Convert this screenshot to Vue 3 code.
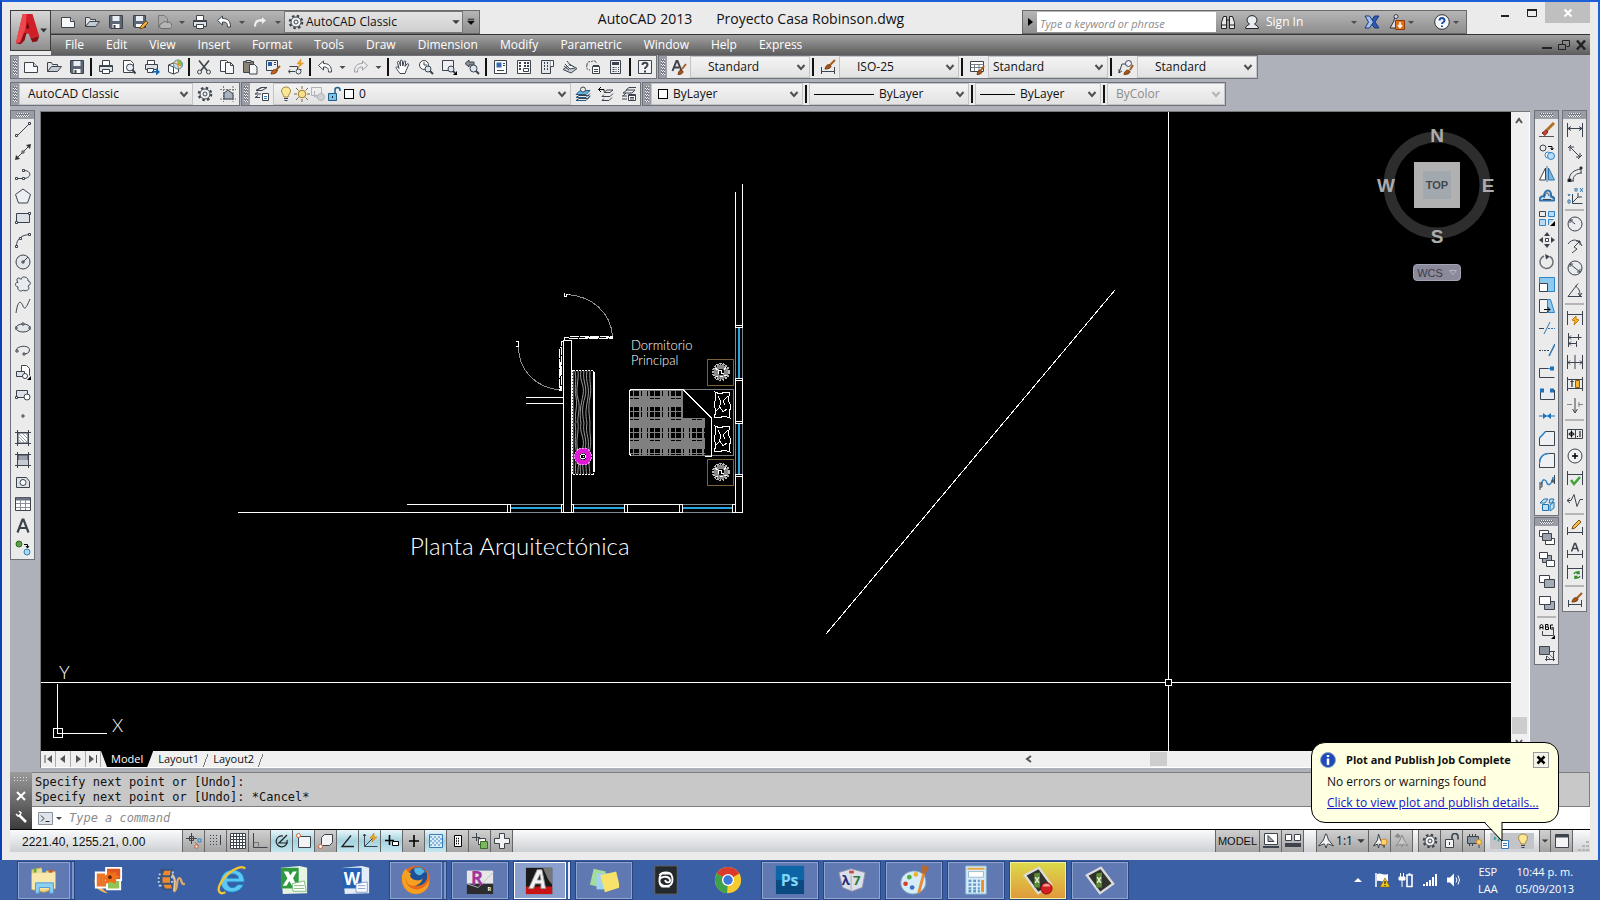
<script setup>
import { h, ref } from 'vue'

const icons = {
  // files
  new: '<path d="M1.5 3.5h9l4 4v6h-13z" fill="#f6f8fa"/><path d="M10.5 3.5v4h4" fill="#c9ced6"/>',
  open: '<path d="M1.5 12.5v-9h4l1 2h5v2" fill="#dfe3e8"/><path d="M1.5 12.5l4-5h10l-4 5z" fill="#c5cbd4"/>',
  save: '<path d="M1.5 1.5h13v13h-12l-1-1z" fill="#5c6674"/><path d="M4.5 2h7v5h-7z" fill="#e8edf3" stroke="none"/><path d="M4.5 10h7v4h-7z" fill="#fff" stroke="none"/><path d="M6.5 11v3" stroke-width="2"/>',
  saveas: '<path d="M1.5 1.5h12v12h-11l-1-1z" fill="#5c6674"/><path d="M4 2h7v5h-7z" fill="#e8edf3" stroke="none"/><path d="M4 10h6v3h-6z" fill="#fff" stroke="none"/><path d="M8 15l1-3 5-5 2 2-5 5z" fill="#f2b13c" stroke="#7a4d12"/>',
  cloud: '<path d="M2.5 1.5h6l3 3v5h-6v4h-3z" fill="#aaa" stroke="#777"/><path d="M6 14.5a2.5 2.5 0 010-5 3 3 0 015-1 3 3 0 013 6z" fill="#b5b5b5" stroke="#6e6e6e"/>',
  print: '<path d="M4.5 6v-4.5h7v4.5" fill="#fff"/><path d="M1.5 6.5h13v6h-13z" fill="#dde1e6"/><path d="M4.5 10.5h7v4h-7z" fill="#fff"/><path d="M2 7.5h12"/>',
  preview: '<path d="M2.5 1.5h7l3 3v9h-10z" fill="#fff"/><circle cx="9" cy="8.5" r="3.5" fill="#e6edf4"/><path d="M11.5 11l3 3.5" stroke-width="2"/>',
  publish: '<path d="M3.5 5v-3.5h7v3.5" fill="#fff"/><path d="M1.5 5.5h12v5h-12z" fill="#dde1e6"/><path d="M3.5 9.5h6v4h-6z" fill="#fff"/><path d="M8 12h4v-3l4 4-4 3.5v-3h-4z" fill="#1668b4" stroke="none"/>',
  threeD: '<path d="M1.5 6l5-2 5 2v7l-5 2-5-2z" fill="#fff"/><path d="M1.5 6l5 2 5-2M6.5 8v7"/><circle cx="11" cy="5.5" r="4.5" fill="#bfe0ef" stroke="#4a7d92"/><path d="M11 1a4 4 0 014 5l-4-.5z" fill="#7ac043" stroke="none"/><path d="M11 1v9M7 4l8 3" stroke="#e2801b"/>',
  cut: '<path d="M3 1.5l8 10M13 1.5l-8 10" stroke-width="1.6"/><circle cx="3.5" cy="13" r="2"/><circle cx="12.5" cy="13" r="2"/>',
  copy: '<path d="M6 12.5h-4.5v-11h6l2 2" fill="#fff"/><path d="M6.5 3.5h5l3 3v8h-8z" fill="#f4f6f8"/><path d="M11.5 3.5v3h3"/>',
  paste: '<path d="M1.5 2.5h10v11h-10z" fill="#8b8276"/><path d="M4 1.5h5v2h-5z" fill="#ddd"/><path d="M7.5 5.5h5l2.5 2.5v7h-7.5z" fill="#f4f6f8"/>',
  match: '<path d="M1.5 1.5h11v10h-11z" fill="#e9eef5"/><path d="M3 3h4v4h-4z" fill="#2a5fa8" stroke="none"/><path d="M9 3.5h2M9 5.5h2"/><path d="M15 7l-4 4" stroke="#a65c1d" stroke-width="2"/><path d="M6 15c1-4 3-5 5-4s1 4-5 4z" fill="#c2651a" stroke="#7a3b0c"/>',
  blockEdit: '<path d="M1.5 7.5h8v3h4"/><path d="M1 12.5h6M2 10.5l-1.5 2 1.5 2"/><circle cx="10.5" cy="12.5" r="2.5" fill="#e6edf4"/><path d="M13 0l-4 5h3l-2 4 5.5-5h-3z" fill="#f5a81c" stroke="#d27d0a" stroke-width=".5"/>',
  undo: '<path d="M1.5 6.5l5-4.5v2.5c5 0 8 2 8 8.5h-3c0-4-1-5-5-5v3z" fill="#fff"/>',
  redo: '<path d="M14.5 6.5l-5-4.5v2.5c-5 0-8 2-8 8.5h3c0-4 1-5 5-5v3z" fill="#eee" stroke="#9a9da2"/>',
  caret: '<path d="M3 5.5h10l-5 5z" fill="#3b3b3b" stroke="none"/>',
  caretSmall: '<path d="M4 6.5h8l-4 4z" fill="#4b4b4b" stroke="none"/>',
  chevron: '<path d="M4.5 6l3.5 4 3.5-4" stroke="#4f4f4f" stroke-width="2"/>',
  pan: '<path d="M5 14.5c-2-3-4-5-4-6s2-1 3 1l-1.5-6c0-1.5 1.5-1.5 2 0l1 3.5-.2-5c.2-1.3 1.8-1.3 2 0l.5 5 1.2-4.5c.6-1.2 1.8-.8 1.7.5l-.7 4.5 2-2.5c1-.8 2 0 1.5 1-1 3-2 4-3.5 8.5z" fill="#fff"/>',
  zoomRt: '<circle cx="6" cy="6" r="4.5" fill="#fff"/><path d="M6 3v3h3"/><circle cx="10" cy="10" r="3" fill="#dce6ef"/><path d="M12 12l3 3" stroke-width="2"/>',
  zoomWin: '<path d="M1.5 1.5h11v10h-11z" fill="#eef0f3"/><circle cx="10" cy="10" r="3" fill="#dce6ef"/><path d="M12 12l2 2" stroke-width="2"/><path d="M16 16h-4l4-4z" fill="#000" stroke="none"/>',
  zoomPrev: '<path d="M1 4.5l4-3.5v2h5v3h-5v2z" fill="#8a8d93"/><circle cx="9.5" cy="9.5" r="3.5" fill="#dce6ef"/><path d="M12 12l3 3" stroke-width="2"/>',
  properties: '<path d="M1.5 1.5h12v13h-12z" fill="#fff"/><path d="M3.5 3.5h5v5h-5z" fill="#356ab1" stroke="none"/><path d="M10 4.5h2M10 6.5h2M4 11.5h7"/>',
  designCenter: '<path d="M1.5 1.5h13v13h-13z" fill="#fff"/><path d="M3 4h2M3 7h2M3 10h2M8 4h2M11 4h2M8 7h2M11 7h2" stroke-width="2"/><path d="M7.5 9.5h5v3h-5z"/>',
  palettes: '<path d="M2.5 1.5h9v13h-9z" fill="#e3e6ea"/><path d="M11.5 1.5h3v6h-3" fill="#fff"/><path d="M5 4h1M8 4h1M5 7h1M8 7h1M5 10h1M8 10h1" stroke-width="2"/>',
  sheetSet: '<path d="M1 10.5l7-5 7 4-6 4.5z" fill="#c8ccd3"/><path d="M3 5l5 5 5-1M2 7l5 4M5 2l4 5" fill="#fff"/>',
  markup: '<path d="M2 6c0-3 2-4 4-3 2-2 6-1 5 1M2 6c-1 3 0 5 3 5" stroke-dasharray="2 1"/><path d="M7.5 7.5h7v7h-7z" fill="#fff"/><path d="M9 10.5h4M9 12.5h4"/><path d="M8 7h6" stroke-width="2"/>',
  calc: '<path d="M2.5 1.5h10v13h-10z" fill="#eef0f3"/><path d="M4 4.5h7" stroke-width="3"/><path d="M4.5 8.5h2M7.5 8.5h1M10 8.5h1M4.5 10.5h2M7.5 10.5h1M10 10.5h1M4.5 12.5h2M7.5 12.5h1M10 12.5h1"/>',
  help: '<path d="M1.5 1.5h13v13h-13z" fill="#f2f3f5"/><path d="M5.5 6c0-3 5-3 5 0 0 2-2.5 1.5-2.5 4M8 11.5v2" stroke-width="2"/>',
  textStyle: '<path d="M1.5 12l4-10h1l4 10M3 8.5h5" stroke-width="2"/><path d="M15 5l-4 5" stroke="#a65c1d" stroke-width="2"/><path d="M7 15.5c1-4 2-5 4-4s1 4-4 4z" fill="#a6561b" stroke="#6e350c"/>',
  dimStyle: '<path d="M1.5 8v7M14.5 8v7M2 12.5h12"/><path d="M15 1l-5 5" stroke="#a65c1d" stroke-width="2"/><path d="M5 10c1-4 3-5 5-4s1 4-5 4z" fill="#a6561b" stroke="#6e350c"/>',
  tableStyle: '<path d="M1.5 2.5h13v10h-13z" fill="#fff"/><path d="M1.5 5.5h13M1.5 8.5h13M5.5 5v7M10 5v7" stroke="#7b8087"/><path d="M15 7l-3 4" stroke="#a65c1d" stroke-width="2"/><path d="M8 15.5c1-4 2-5 4-4s1 4-4 4z" fill="#a6561b" stroke="#6e350c"/>',
  leaderStyle: '<path d="M1 14l3-9h4"/><path d="M1 10l0 4 3-2"/><circle cx="10.5" cy="4.5" r="3" fill="#eef"/><path d="M15 6l-3 5" stroke="#a65c1d" stroke-width="2"/><path d="M6 15.5c1-4 3-5 5-4s1 4-5 4z" fill="#a6561b" stroke="#6e350c"/>',
  gear: '<circle cx="8" cy="8" r="6.3" stroke-width="2" stroke-dasharray="2.5 2.45"/><circle cx="8" cy="8" r="5" fill="#f2f3f5"/><circle cx="8" cy="8" r="2"/>',
  frame: '<path d="M3.5 0v16M13 0v16M0 3.5h16M0 13h16" stroke="#777" stroke-dasharray="2 1"/><path d="M4 13v-6l4-3 5 4v5z" fill="#a9b3c0"/>',
  layers: '<path d="M2 4.5h6l5-3h-6zM1 8h6M1 11.5h5M2 4.5l6-3M1 8l3-2M1 11.5l3-2"/><path d="M8.5 7.5h6v7h-6z" fill="#fff"/><path d="M10 10.5h3M10 12.5h3" stroke="#2a77b8"/>',
  bulb: '<path d="M8 1c-3 0-4.5 2-4.5 4s2 3.5 2.5 6h4c.5-2.5 2.5-4 2.5-6s-1.5-4-4.5-4z" fill="#fbe795" stroke="#a48a3c"/><path d="M6 12.5h4M6.5 14.5h3"/>',
  sun: '<circle cx="8" cy="8" r="3.8" fill="#fbe08a" stroke="#9b7d2e"/><path d="M8 0v3M8 13v3M0 8h3M13 8h3M2 2l2.5 2.5M11.5 11.5l2.5 2.5M14 2l-2.5 2.5M2 14l2.5-2.5" stroke="#7d6c3d"/>',
  vpFreeze: '<path d="M1.5 1.5h10v8h-10zM4.5 5v6h4" stroke="#b0b3b8"/><circle cx="11" cy="11" r="3.5" fill="#cfd1d5" stroke="#b0b3b8"/>',
  unlock: '<path d="M2.5 7.5h8v7h-8z" fill="#7fc0e6" stroke="#1e5e8a"/><path d="M9 7v-3a2.5 2.5 0 015 0v1" stroke="#1e5e8a" stroke-width="1.5"/><path d="M6.5 10v2" stroke="#123"/>',
  layerCur: '<path d="M1 14.5l3-2h9M1 11.5l3-2h10M13 12.5l2-3" /><path d="M1 8.5l4-4h10l-4 4z" fill="#69b5e0" stroke="#245a80"/><path d="M1 11.5h10l4-4M1 14.5h10l4-4" stroke="#245a80"/><circle cx="8" cy="3.5" r="2.5" fill="#eee"/>',
  layerPrev: '<path d="M6 6.5h6l3-2.500h-6zM4 10.500h8l3-3M4 10.500l2-2M4 14.500h7l3-3M4 14.500l2-2" fill="none"/><path d="M1 3.5h5v2M3 1l-2.5 2.5 2.5 2.5" stroke="#000"/>',
  layerStates: '<path d="M2 10l3-3M2 7l4-3h8l-3 3zM5 4l3-2.5h7M1 10h5M1 13h5"/><path d="M7.5 8.5h7v6h-7z" fill="#fff"/><path d="M8 9.5h6M9 11.5h4M9 13h4"/>',
  // draw
  line: '<path d="M2 14l12-12"/><path d="M.5 12.5h2v2h-2zM13.5 .5h2v2h-2z" fill="#fff"/>',
  xline: '<path d="M1 15l14-14"/><path d="M0 16l1-5 4 4zM16 0l-5 1 4 4z" fill="#333" stroke="none"/><path d="M7 7h2v2h-2z" fill="#fff"/>',
  pline: '<path d="M2 12.5h6c9 0 9-8 1-8"/><path d="M.5 11.5h2v2h-2zM7.5 3.5h2v2h-2zM7.5 11.5h2v2h-2z" fill="#fff"/>',
  polygon: '<path d="M8 1l7.5 5.5-3 8.5h-9l-3-8.5z" fill="#eceff3"/>',
  rect: '<path d="M1.5 3.5h13v9h-13z" fill="#dde1e7"/><path d="M.5 11.5h2v2h-2zM13.5 2.5h2v2h-2z" fill="#fff"/>',
  arc: '<path d="M1.5 14c0-7 5-11 13-11.5"/><path d="M.5 13.5h2v2h-2zM4.5 5.5h2v2h-2zM13.5 1.5h2v2h-2z" fill="#fff"/>',
  circle: '<circle cx="8" cy="8" r="7" fill="#e3e6ea"/><path d="M8 8l5-5M7 7h2v2h-2z"/>',
  revcloud: '<path d="M6 3.500c0-4 8-3 7 1.500 3 0 3 4 0 5 3 4-3 6-5 4-1 2-6 1-5-3-4-1-3-5 0-4.500-3-4 1-6 3-3z" fill="#e8ebef"/>',
  spline: '<path d="M1 15c2-14 5-12 7-7s4 0 7-7"/>',
  ellipse: '<ellipse cx="8" cy="8" rx="7" ry="4" fill="#e3e6ea"/><path d="M7 3h2v2h-2zM0 7h2v2h-2zM14 7h2v2h-2z" fill="#fff"/>',
  ellArc: '<path d="M1.5 9c-2-5 13-7 13-1 0 3-3 4-6 4"/><path d="M1 8h2v2h-2zM8 11h2v2h-2z" fill="#fff"/>',
  insert: '<path d="M6.5 7v-5.5h5l3 3v7" fill="#fff"/><path d="M1.5 7.5h8v5h-8z" fill="#dde1e7"/><circle cx="10" cy="12" r="2.5" fill="#fff"/><path d="M16 16h-4l4-4z" fill="#000" stroke="none"/>',
  block: '<path d="M1.5 4.5h11v7h-11z" fill="#dde1e7"/><circle cx="12" cy="11" r="3" fill="#fff"/><path d="M.5 10.5h2v2h-2z" fill="#fff"/>',
  point: '<path d="M7 7h2v2h-2z"/>',
  hatch: '<path d="M3 3h10v10h-10z" fill="#fff"/><path d="M3 6l7 7M3 9l4 4M4 4l8 8M7 3l6 6M10 3l3 3" stroke="#9ba1aa"/><path d="M2.5 0v16M13.5 0v16M0 2.5h16M0 13.5h16"/>',
  gradient: '<path d="M3 3h10v10h-10z" fill="#9aa1ac"/><path d="M3 8h10v5h-10z" fill="#c7ccd3" stroke="none"/><path d="M2.5 0v16M13.5 0v16M0 2.5h16M0 13.5h16"/>',
  region: '<path d="M1.5 3.5h10l3 4v6h-13z" fill="#dde1e7"/><circle cx="8" cy="8.5" r="3" fill="#fff"/>',
  table: '<path d="M.5 1.5h15v13h-15z" fill="#fff"/><path d="M1 3h14" stroke-width="3" stroke="#6b7380"/><path d="M1 7.5h14M1 11.5h14M5.5 4v10M10.5 4v10" stroke="#8b9098"/>',
  mtext: '<path d="M2.5 14.5l5-13h1l5 13M4.5 10h7" stroke-width="2.2"/>',
  addSel: '<circle cx="4" cy="4" r="3" fill="#5aa04a" stroke="#2f6a22"/><circle cx="12" cy="12" r="3" fill="#a8d8f2" stroke="#3183b5"/><path d="M9 4.5h3.5v3M11 6l1.5 2 1.5-2" stroke="#000"/>',
  // modify
  erase: '<path d="M0 14.5h15" stroke="#555"/><path d="M15 1l-8 8" stroke="#b07025" stroke-width="3"/><path d="M7 8l2 2-3 3.5-3-2.5z" fill="#d2403a" stroke="#6e2b1c"/>',
  copyObj: '<circle cx="4" cy="4" r="3"/><circle cx="9" cy="11" r="3" fill="#fff" stroke="#2f85c7"/><circle cx="12" cy="12" r="3.5" fill="#b9dcf2" stroke="#2f85c7"/><path d="M9 2.5h4v3M11.5 4l1.5 2 1.5-2" stroke="#000"/>',
  mirror: '<path d="M6.5 2v12h-6z" fill="#fff"/><path d="M9.5 2v12h6z" fill="#7fb8e2" stroke="#2f74ad"/><path d="M8 0v16" stroke="#2f74ad"/>',
  offset: '<path d="M1 12.5c-1-3 2-5 4-4 0-8 8-8 7 0 4 0 4 4 3 4z" fill="#cfe5f5" stroke="#2f74ad" stroke-width="2"/><path d="M4 11.5h8M6 8c0-4 4-4 4 0"/>',
  array: '<path d="M.5 1.5h6v5h-6z"/><path d="M9.5 1.5h6v5h-6zM.5 9.5h6v6h-6zM9.5 15v-5.5h5" fill="#b9dcf2" stroke="#2f85c7"/><path d="M16 16h-5l5-5z" fill="#000" stroke="none"/>',
  move: '<path d="M6.5 6.5h3v3h-3z" fill="#fff"/><path d="M8 0l3 4h-6zM8 16l3-4h-6zM0 8l4-3v6zM16 8l-4-3v6z" fill="#3c434c" stroke="none"/>',
  rotate: '<path d="M11 2.5a6.5 6.5 0 11-6-.5" stroke-width="1.5" stroke="#6c7076"/><path d="M6 0l5 2.5-4 3z" fill="#3c434c" stroke="none"/>',
  scale: '<path d="M.5 1.5h15v14h-15z" fill="#8ec9ee" stroke="#2f85c7"/><path d="M.5 7.5h8v8h-8z" fill="#fff"/>',
  stretch: '<path d="M.5 1.5h8v13h-8z" fill="#f4f4f4"/><path d="M8.5 1.5h3l4 13h-7z" fill="#8ec9ee" stroke="#2f85c7"/><path d="M5 11.5h6M8.5 9l2.5 2.5-2.5 2.5" stroke="#000"/>',
  trim: '<path d="M0 8.5h5"/><path d="M5 14l6-12" stroke="#2f74ad"/><path d="M9 8.5h7" stroke="#2f74ad" stroke-dasharray="2 1"/>',
  extend: '<path d="M0 8.5h4M5 8.5h5" stroke-dasharray="2 1"/><path d="M10 14l6-12" stroke="#2f74ad" stroke-width="1.5"/>',
  breakAt: '<path d="M9 4.5h-8.5v9h15"/><path d="M9 4.5h6" stroke="#2f85c7"/><path d="M11 2.5h4v4h-4z" fill="#1b72bd" stroke="none"/>',
  breakObj: '<path d="M1.5 4v9.5h14v-9.5" fill="#e8ebef"/><path d="M1 2.5h4v4h-4zM11 2.5h4v4h-4z" fill="#1b72bd" stroke="none"/>',
  join: '<path d="M0 8h16" stroke="#1b72bd"/><path d="M4 5l4 3-4 3zM12 5l-4 3 4 3z" fill="#1b72bd" stroke="none"/>',
  chamfer: '<path d="M.5 15v-7l6-6.5h9v14h-15z" fill="#eef0f3"/><path d="M.5 8l6-6.5" stroke="#2f85c7" stroke-width="1.5"/>',
  fillet: '<path d="M.5 15.5v-4c0-6 4-10 9-10h6v14z" fill="#eef0f3"/><path d="M.5 11c0-6 4-9.5 9-9.5" stroke="#2f85c7" stroke-width="1.5"/>',
  blend: '<path d="M2 11c2-8 5-5 6-2s5 2 6-6" stroke="#2f85c7" stroke-width="1.5"/><path d="M1 8v5h2v-5M15.5 1v9M1 13v3"/><path d="M13 6h2v2h-2z"/>',
  explode: '<path d="M1 7l4-4h4l-3 4zM11 3h4l-2 4h-3zM3.500 8.500h6v6h-6zM11 9l4-3v6l-4 3z" fill="#bfe0f5" stroke="#1f74b0"/>',
  front: '<path d="M.5 1.5h9v6h-9zM6.5 9.5h9v6h-9z" fill="#fff"/><path d="M3.5 4.5h9v7h-9z" fill="#9da3ad"/>',
  back: '<path d="M3.5 4.5h9v7h-9z" fill="#9da3ad"/><path d="M.5 1.5h8v6h-8zM7.5 9.5h8v6h-8z" fill="#fff"/>',
  above: '<path d="M.5 2.5h10v7h-10z" fill="#fff"/><path d="M5.5 6.5h10v8h-10z" fill="#a5abb4"/>',
  under: '<path d="M5.5 6.5h10v8h-10z" fill="#a5abb4"/><path d="M.5 1.5h11v8h-11z" fill="#fff"/>',
  abc: '<path d="M3.5 8v4.5h11v-8h-2"/><path d="M1 6.5v-4l1.5-1 1.5 1v4M1 4.5h3M6.5 1.5v5h3v-2.5h-3M6.5 1.5h2.5v2M14 2h-2.5v4h2.5" stroke="#000"/><path d="M16 16h-4l4-4z" fill="#000" stroke="none"/>',
  hatchBack: '<path d="M.5 1.5h10v8h-10z" fill="#8d95a1"/><path d="M6 14.5h10M7.5 11v5M14.5 6v10M11 6.5h5"/><path d="M8 11l3 3M11 10l3 3" stroke="#777"/>',
  // dimension
  dimLin: '<path d="M.5 1v14M15.5 1v14M1 6.5h14M4 4.5l-3 2 3 2M12 4.5l3 2-3 2"/>',
  dimAli: '<path d="M1 4l3-3M11 15l4-4M3 3l10 10M3 7v-4h4M13 9v4h-4"/>',
  dimArc: '<path d="M2 15c0-8 5-11 12-12M6 15c0-5 3-8 9-8M1 15h6M14 1v6"/><path d="M1 13h3v3h-3zM13 1h2v2h-2z" fill="#000"/>',
  dimOrd: '<path d="M5.5 6v9.5h10M6 14l5-5h4M11 9v-4"/><path d="M1 6l1 2 1-2M1 12h2v3h-2zM8 0h2v3h-2zM13 0l3 4M16 0l-3 4" stroke="#2f74ad"/>',
  dimRad: '<circle cx="8" cy="8" r="7" fill="#e9ebee"/><path d="M8 8l-5-4M3 7v-3h3"/>',
  dimJog: '<path d="M1 6c4-6 11-5 14 2M5 15l5-4-3-2 6-6M9 3h4v4"/>',
  dimDia: '<circle cx="8" cy="8" r="7" fill="#e9ebee"/><path d="M3 4l10 8M3 7v-3h3M13 9v3h-3"/>',
  dimAng: '<path d="M15 14.5h-14l10-13M8 4c4 2 5 5 5 10M11 11l2 3 2-3"/>',
  dimQuick: '<path d="M.5 1v14M15.5 1v14M1 4.5h14"/><path d="M9 6l-4 4 3 1-1 4 5-5-3-1z" fill="#f5b52c" stroke="#c97f0c"/>',
  dimBase: '<path d="M1.5 1v14M1.5 5.5h13M1.5 11.5h8M11.5 2v6M9.5 9v6M4 3.5l-2 2 2 2M4 9.5l-2 2 2 2"/>',
  dimCont: '<path d="M.5 1v14M8 1v14M15.5 1v14M1 8.5h14M3 6.5l-2 2 2 2M13 6.5l2 2-2 2"/>',
  dimSpace: '<path d="M.5 1v14M15.5 1v14M1 3.5h14M1 12.5h14"/><path d="M8.5 4.5h4v7h-4z" fill="#f5b52c" stroke="#8a5b0d"/><path d="M5 5v6M3.5 6l1.5-1.5 1.5 1.5" stroke="#000"/>',
  dimBreak: '<path d="M8 0v14M5.5 11l2.5 4 2.5-4" /><path d="M0 6.5h5M11 6.5h5M12 4v5" stroke="#888"/>',
  tolerance: '<path d="M.5 3.5h15v9h-15zM8.5 3v9"/><circle cx="4.5" cy="8" r="2"/><path d="M4.5 4.5v7M1.5 8h6M10.5 11v-1M13 5v6"  stroke="#000"/>',
  center: '<circle cx="8" cy="8" r="7" fill="#f0f1f3"/><path d="M8 5v6M5 8h6" stroke="#000" stroke-width="1.5"/>',
  inspect: '<path d="M.5 1v14M15.5 1v14M1 4.5h14"/><path d="M4 10l3 4 6-7" stroke="#3fa535" stroke-width="2.5"/>',
  jogLine: '<path d="M0 8.5h4l3-6 3 12 3-7h3M3 6l-3 2.5 3 2.5"/>',
  dimEdit: '<path d="M.5 7v8M15.5 7v8M1 12.5h14"/><path d="M5 9l1-3 6-6 2 2-6 6z" fill="#f5c14a" stroke="#7a4d12"/>',
  dimText: '<path d="M.5 8v8M15.5 8v8M1 12.5h14"/><path d="M4.5 9.500l3-8h1l3 8M6 6.500h4" stroke-width="1.5"/>',
  dimUpd: '<path d="M.5 1v14M15.5 1v14M1 4.5h14"/><path d="M7 10a3 3 0 015-1M13 12a3 3 0 01-5 1M12 7v2.5h-2.5M8 15v-2.5h2.5" stroke="#2f8a2a" stroke-width="1.4"/>',
  // status bar
  infer: '<path d="M5.5 0v11M0 5.5h11M3.5 3.5h4v4h-4z"/><path d="M9 9l4 4" stroke="#c4673c"/><path d="M12 6h3v3h-3z" stroke="#2f85c7"/><path d="M9 12h3v3h-3z" stroke="#c4673c" fill="#fff"/>',
  snap: '<path d="M2 2.5h9M2 5.5h9M2 8.5h9M2 11.5h9" stroke-dasharray="1 2"/><path d="M12.5 2v10"/>',
  grid: '<path d="M.5 .5h15v15h-15z" fill="#fff"/><path d="M3.5 0v16M6.5 0v16M9.5 0v16M12.5 0v16M0 3.5h16M0 6.5h16M0 9.5h16M0 12.5h16"/>',
  ortho: '<path d="M1.5 0v14.5h14"/><path d="M2 9.5h4.5v5" stroke="#777"/>',
  polar: '<path d="M14 10h-9l8-8M13 7a5.5 5.5 0 11-4-4" stroke="#222" stroke-width="1.2"/>',
  osnap: '<path d="M2.5 3.5h12v11h-12z" fill="#f2f3f5"/><circle cx="2.5" cy="2.5" r="2" stroke="#d4622a" fill="#fff"/>',
  osnap3: '<path d="M3.5 4.5l3-3h8v8l-3 3h-8z" fill="#f2f3f5"/><circle cx="2.5" cy="13.5" r="2" stroke="#d4622a" fill="#fff"/>',
  otrack: '<path d="M14 13.5h-12l9-11" stroke="#222" stroke-width="1.3"/>',
  ducs: '<path d="M2.5 1v12.5h13M3 13l8-8M1 3l1.5-2 1.5 2"/><path d="M12 0l-4 5h3l-1 4 5-5h-3z" fill="#f5a81c" stroke="#c97f0c" stroke-width=".6"/>',
  dyn: '<path d="M5.5 2v10M1 7.5h9" stroke="#000" stroke-width="1.6"/><path d="M8.5 8.5h6v4h-6z" fill="#fff" stroke="#000"/>',
  lwt: '<path d="M8 2v12M3 8h10" stroke="#000" stroke-width="1.6"/>',
  tpy: '<path d="M1.5 1.5h13v13h-13z" fill="#d8edf9" stroke="#3a78b3"/><path d="M2 4h12M2 8h12M2 12h12" stroke="#88b9dd" stroke-width="2" stroke-dasharray="2 2"/><path d="M4 6h10M4 10h10" stroke="#88b9dd" stroke-width="2" stroke-dasharray="2 2"/>',
  qp: '<path d="M4.5 2.5h7v11h-7z" fill="#fff" stroke="#000"/><path d="M6 5.5h4M6 8h4M6 10.5h4" stroke="#000" stroke-dasharray="1 1" stroke-width="1.5"/>',
  cycling: '<path d="M4.5 0v8M0 4.5h8M8 6.5v-1M6.5 5.5h7v6h-7z" fill="#fff"/><path d="M8.5 8.5h7v7h-7z" fill="#7bb661" stroke="#3a6d25"/>',
  annoMon: '<path d="M5.5 .5h5v5h5v5h-5v5h-5v-5h-5v-5h5z" fill="#f2f3f5"/>',
  modelIc: '<path d="M1.5 .5h13v11h-13z" fill="#fff"/><path d="M5 2.5v6h6z" fill="#aaa"/><path d="M0 14h16" stroke-width="2"/>',
  layoutsIc: '<path d="M.5 1.5h6v6h-6zM9.5 1.5h6v6h-6z" fill="#fff"/><path d="M0 12h16" stroke-width="4"/>',
  anno: '<path d="M7.5 1l-2 6-5 6 5-2h1l1.5 4 1.5-4h1l5 2-5-6-2-6z" fill="#f2f3f5"/>',
  annoLight: '<path d="M6.5 1l-1 6-4 6 4-2 1 4 1-4 5 2-4-6z" fill="#f2f3f5"/><circle cx="12" cy="9" r="3" fill="#ffd27a" stroke="#d98e1c"/><path d="M12 12v3"/>',
  annoAuto: '<path d="M8 2l-2 5-4 6 5-2 1 3 1-3 5 2-4-6z" fill="#c9c9c9" stroke="#8a8a8a"/><path d="M1 3l4 1M3 1l3 3" stroke="#8a8a8a" stroke-width="2"/>',
  lockOpen: '<path d="M1.5 6.5h8v8h-8z" fill="#f2f3f5"/><path d="M8 6v-2.5a3 3 0 016 0v3" stroke-width="1.6"/><path d="M5.5 9v3"/>',
  hardware: '<path d="M1.5 3.5h11v7h-11z" fill="#8d95a1"/><path d="M3.5 1v2M6.5 1v2M9.5 1v2M3.5 11v2M6.5 11v2" /><circle cx="13" cy="9" r="2.5" fill="#ffd27a" stroke="#d98e1c"/><path d="M13 12v3"/>',
  plotJob: '<path d="M1 5l12 5" stroke="#3fa6a0" stroke-dasharray="2 2" stroke-width="3"/><path d="M8.5 7.5h7v8h-7z" fill="#fff" stroke="#3a78b3"/><path d="M10 10.5h4M10 12.5h4" stroke="#3a78b3"/>',
  clean: '<path d="M1.5 1.5h13v13h-13z" fill="#f4f4f4"/><path d="M2 3h12" stroke-width="3"/>',
  // title bar
  binoc: '<path d="M1.5 14.5v-6l2-6h3v12zM14.5 14.5v-6l-2-6h-3v12z" fill="#e8e8e8" stroke="#222"/><path d="M6.5 6h3M2 11h4M10 11h4" stroke="#222"/>',
  user: '<path d="M1.5 14.5c0-3 3-3 4-4.5a5 4.5 0 115 0c1 1.5 4 1.5 4 4.5z" fill="#e9edf2" stroke="#222"/>',
  exchange: '<path d="M10.500 2h4.500l-4 6 4 6h-4.500l-4-6z" fill="#2d5bb5" stroke="#183a80"/><path d="M1 2h4.500l4 6-4 6h-4.500l3.500-6z" fill="#a9c1ea" stroke="#183a80"/>',
  connect: '<path d="M6 1l-1 6-4 7h7" fill="#dde" stroke="#333"/><circle cx="7" cy="2.5" r="2" fill="#dde"/><path d="M6.5 6.5h9v9h-9z" fill="#e0701c" stroke="#8c3d06"/><path d="M11 8v5M9 11l2 2.5 2-2.5" stroke="#fff" stroke-width="1.5"/>',
  helpRound: '<circle cx="8" cy="8" r="7.3" fill="#f6f8fb" stroke="#333"/><path d="M5.5 6.5c0-3.5 5-3.5 5 0 0 2-2.5 1.5-2.5 3.5M8 11.5v1.5" stroke="#1d4da0" stroke-width="2"/>',
}

const Icon = (p) =>
  h('svg', {
    viewBox: '0 0 16 16',
    fill: 'none',
    stroke: '#3c434c',
    'stroke-width': 1,
    'aria-hidden': 'true',
    innerHTML: icons[p.name],
  })

const menus = ['File', 'Edit', 'View', 'Insert', 'Format', 'Tools', 'Draw', 'Dimension', 'Modify', 'Parametric', 'Window', 'Help', 'Express']

// '|' is a separator, '>' a narrow drop-down arrow
const standardBar = ['new', 'open', 'save', '|', 'print', 'preview', 'publish', 'threeD', '|', 'cut', 'copy', 'paste', 'match', 'blockEdit', '|', 'undo', '>', 'redo', '>', '|', 'pan', 'zoomRt', 'zoomWin', 'zoomPrev', '|', 'properties', 'designCenter', 'palettes', 'sheetSet', 'markup', 'calc', '|', 'help']
const quickBar = ['new', 'open', 'save', 'saveas', 'cloud', '>', 'print', 'undo', '>', 'redo', '>']
const styleBar = [
  { icon: 'textStyle', label: 'Text style', value: 'Standard', cls: 'indent' },
  { icon: 'dimStyle', label: 'Dimension style', value: 'ISO-25', cls: 'indent' },
  { icon: 'tableStyle', label: 'Table style', value: 'Standard', cls: '' },
  { icon: 'leaderStyle', label: 'Multileader style', value: 'Standard', cls: 'indent' },
]
const drawBar = ['line', 'xline', 'pline', 'polygon', 'rect', 'arc', 'circle', 'revcloud', 'spline', 'ellipse', 'ellArc', 'insert', 'block', 'point', 'hatch', 'gradient', 'region', 'table', 'mtext', 'addSel']
const modifyBar = ['erase', 'copyObj', 'mirror', 'offset', 'array', 'move', 'rotate', 'scale', 'stretch', 'trim', 'extend', 'breakAt', 'breakObj', 'join', 'chamfer', 'fillet', 'blend', 'explode']
const orderBar = ['front', 'back', 'above', 'under', '|', 'abc', 'hatchBack']
const dimBar = ['dimLin', 'dimAli', 'dimArc', 'dimOrd', '|', 'dimRad', 'dimJog', 'dimDia', 'dimAng', '|', 'dimQuick', 'dimBase', 'dimCont', 'dimSpace', 'dimBreak', '|', 'tolerance', 'center', 'inspect', 'jogLine', '|', 'dimEdit', 'dimText', 'dimUpd', '|', 'dimStyle']

const modes = ref([
  { icon: 'infer', on: false },
  { icon: 'snap', on: false },
  { icon: 'grid', on: false },
  { icon: 'ortho', on: false },
  { icon: 'polar', on: true },
  { icon: 'osnap', on: true },
  { icon: 'osnap3', on: false },
  { icon: 'otrack', on: true },
  { icon: 'ducs', on: true },
  { icon: 'dyn', on: true },
  { icon: 'lwt', on: false },
  { icon: 'tpy', on: true },
  { icon: 'qp', on: false },
  { icon: 'cycling', on: false },
  { icon: 'annoMon', on: false },
])

const tabs = ['Model', 'Layout1', 'Layout2']
const activeTab = ref('Model')
const search = ref('')
const command = ref('')
const balloon = ref(true)

const txt = (x, y, size, fill, s) =>
  `<text x="${x}" y="${y}" font-size="${size}" fill="${fill}" font-family="Open Sans, sans-serif" font-weight="700">${s}</text>`

const apps = [
  { name: 'Explorer', state: 'run stack', art: '<path d="M3 5l10-2 2 3 13 1v18l-12 4-13-3z" fill="#f1d98a" stroke="#c9a54a"/><path d="M5 4h3v4h-3z" fill="#5bb04b"/><path d="M14 4h4v4h-4z" fill="#3f7fd0"/><path d="M21 5h4v4h-4z" fill="#d0542f"/><path d="M3 9l25-1v17l-25 1z" fill="#f8e8ad"/><path d="M7 30v-11h19v11h-4v-6h-11v6z" fill="#8fd0f2" stroke="#4b9bd0"/>' },
  { name: 'Photo gallery', state: '', art: '<path d="M2 14c-2 8 4 15 14 16-6-4-10-8-9-15z" fill="#f0b45c"/><path d="M3 8h12v16h-12z" fill="#e9762a" stroke="#fff" stroke-width="2"/><path d="M14 3h16v13h-16z" fill="#e0551f" stroke="#fff" stroke-width="2"/><path d="M15 16h14v10h-14z" fill="#8fc45a" stroke="#fff" stroke-width="2"/><path d="M17 6l3 3 4-2 1 4 4 1-4 3-1 5-5-2-5 2-1-5-3-3 4-1z" fill="#f2701c"/><circle cx="18" cy="13" r="2" fill="#5c2a10"/>' },
  { name: 'Movie maker', state: '', art: '<path d="M6 4h14c-3 7-3 16 0 23h-11c-7-6-6-17-3-23z" fill="#38547f"/><path d="M10 6h7c-1 2-1 4-1 5h-8zM8 13h8v6h-8zM9 21h8l1 4h-7z" fill="#f08a2c"/><path d="M4 10h2M3 14h2M3 18h2M4 22h3M18 8h2M17 13h2M17 18h2" stroke="#bcd6f5" stroke-width="2"/><path d="M20 28c5 0 2-14 6-14 3 0 1 8 6 6" stroke="#d9a86a" stroke-width="2.5" fill="none"/><path d="M18 10c5 4 3 12 2 18" stroke="#e9c89a" fill="none" stroke-width="2"/>' },
  { name: 'Internet Explorer', state: '', art: '<path d="M29 18H11c0 7 8 8 11 3h6c-4 11-23 11-24-3C4 1 30 1 29 18zM11 14h12c-1-6-11-6-12 0z" fill="#5ec8f5" stroke="#1a86c8"/><path d="M30 4c-4-5-20 3-27 17-3 7 0 11 6 8" stroke="#f5c531" stroke-width="2.5" fill="none"/>' },
  { name: 'Excel', state: '', art: '<path d="M2 3l20-2 8 2v27l-26 1z" fill="#e7f4e4"/><path d="M2 3h19v22h-19z" fill="#2f9a3f"/><path d="M5 7h5l2 4 3-4h4l-4 7 4 8h-5l-3-5-3 5h-4l5-8z" fill="#fff"/><path d="M14 20l13-3 2 11h-14z" fill="#fff" stroke="#7fb97a"/><path d="M16 22h11M16 25h11" stroke="#7fb97a"/>' },
  { name: 'Word', state: '', art: '<path d="M2 3l20-2 8 2v27l-26 1z" fill="#e4edf8"/><path d="M2 3h20v22h-20z" fill="#2461b5"/>' + txt(3, 21, 18, '#fff', 'W') + '<path d="M16 20l12-2v11h-12z" fill="#fff" stroke="#7f9fd0"/><path d="M18 22h8M18 25h8" stroke="#7f9fd0"/>' },
  { name: 'Firefox', state: 'run stack', art: '<circle cx="16" cy="16" r="15" fill="#e8691b"/><circle cx="18" cy="12" r="10" fill="#1c4f94"/><path d="M14 4c4-3 10-1 12 4-3-1-3 3-6 3s-6-3-6-7z" fill="#58b4e2"/><path d="M1 12c1-5 3-7 5-8 0 3 2 4 5 5-3 2 0 6 4 7 4 1 6 0 8-2-1 6-6 8-10 8-6 0-8-5-8-9-1 6 4 13 12 13 6 0 11-5 13-10 1 9-7 15-14 15S0 25 1 12z" fill="#f5a021"/>' },
  { name: 'Revit', state: 'run', art: '<path d="M2 6h28v14h-28z" fill="#e6e6e8"/><path d="M2 20h28v11h-28z" fill="#2c2c30"/><path d="M2 20l12 4 16-16" stroke="#bbb" fill="none"/>' + txt(6, 21, 20, '#a0359c', 'R') + txt(24, 28, 6, '#fff', 'R') },
  { name: 'AutoCAD', state: 'run stack active', art: '<path d="M1 3h28v28h-28z" fill="#1a1a1a"/><path d="M1 23h28v8h-28z" fill="#c81414"/><path d="M19 3h10v18l-4-5z" fill="#777"/><path d="M4 25l9-20h5l4 20h-5v-5h-6l-2 5zM13 16h4l-1-6z" fill="#f2f2f2" stroke="#999"/>' },
  { name: 'Notes', state: 'run', art: '<path d="M5 4l13 3-4 17-13-3z" fill="#a4dc9a"/><path d="M8 9h13v17h-13z" fill="#9fd2ee"/><path d="M12 11l17-4 4 17-16 5z" fill="#f7e36b"/>' },
  { name: '3ds Max', state: '', art: '<path d="M4 1h24v30h-24z" fill="#24292d" stroke="#666"/><path d="M9 11c3-4 11-4 13 0s1 10-3 11-10 0-10-5 9-6 11-2-4 5-5 1M21 9h-9c-4 2-4 12 0 14h8" stroke="#fff" stroke-width="2" fill="none"/>' },
  { name: 'Chrome', state: '', art: '<circle cx="16" cy="16" r="14" fill="#f6cb2f"/><path d="M16 16L4 9a14 14 0 0124 0z" fill="#d93a2c"/><path d="M16 16L4 9a14 14 0 0011 21z" fill="#3ea24a"/><circle cx="16" cy="16" r="6.5" fill="#fff"/><circle cx="16" cy="16" r="5" fill="#3b78d8"/>' },
  { name: 'Photoshop', state: 'run', art: '<path d="M1 1h30v30h-30z" fill="#0b4a80"/><path d="M1 1h30v15h-30z" fill="#0d65a6"/>' + txt(6, 22, 17, '#7fd6fa', 'Ps') },
  { name: 'Sketch', state: 'run', art: '<path d="M2 8l13-4 15 4-3 16-11 4-10-4z" fill="#dcdfe8" stroke="#8e93a8"/><path d="M15 11v17" stroke="#a8acbc"/><path d="M13 6h5v3h-5z" fill="#c94a4a"/>' + txt(5, 21, 14, '#232a7a', 'λ') + txt(17, 21, 14, '#2f7a3c', '7') },
  { name: 'Paint', state: 'run', art: '<path d="M3 14c5-10 22-10 25 0s-5 17-13 17-16-7-12-17z" fill="#d6ecf7" stroke="#7fa8c0"/><circle cx="7" cy="20" r="2.5" fill="#d8402e"/><circle cx="11" cy="13" r="2.5" fill="#4fae47"/><circle cx="18" cy="10" r="2.5" fill="#f0b429"/><circle cx="14" cy="24" r="2.5" fill="#3972c4"/><path d="M27 7l-6 23" stroke="#e88b34" stroke-width="3"/><path d="M25 0l7 2-4 8-4-2z" fill="#b56b2f"/>' },
  { name: 'Calculator', state: 'run', art: '<path d="M5 1h22v30h-22z" fill="#d6eaf7" stroke="#7fb0d2"/><path d="M7 3h18v2h-18z" fill="#f0a53a"/><path d="M8 7h16v6h-16z" fill="#fff" stroke="#9bc"/><path d="M8 17h12M8 21h12M8 25h12M8 28h12" stroke="#5f98c4" stroke-width="2.5" stroke-dasharray="3 2"/><path d="M23 16v13" stroke="#e8902a" stroke-width="3"/>' },
  { name: 'Recorder', state: 'run record', art: '<path d="M2 11l15-8 13 18-14 9z" fill="#2f332c" stroke="#dcdcdc" stroke-width="2.5"/><path d="M12 9l6-1v16h-6z" fill="#5c8a3a"/><path d="M13 13l4 6M17 13l-4 6" stroke="#e3f2d2" stroke-width="1.5"/><circle cx="25" cy="25" r="6" fill="#d42020" stroke="#8a0d0d"/><path d="M21 23a4 3 0 018 0z" fill="#f29a9a"/>' },
  { name: 'Camtasia', state: 'run', art: '<path d="M2 11l15-8 13 17-14 10z" fill="#2f332c" stroke="#dcdcdc" stroke-width="2.5"/><path d="M12 9l6-1v16h-6z" fill="#5c8a3a"/><path d="M13 13l4 6M17 13l-4 6" stroke="#e3f2d2" stroke-width="1.5"/>' },
]
</script>

<template>
  <div class="desktop">
    <main class="window">
      <header class="top">
        <button class="app-button" aria-label="Application menu">
          <svg viewBox="0 0 40 40" class="app-logo">
            <path d="M5 33L12 3l10 0 7 23-9 2-2-5-5 1-2 8z" fill="#d11f28" />
            <path d="M12 3l4 0-1 15-6 14-4 1z" fill="#f0474d" />
            <path d="M15 18l2-7 2 7z" fill="#6e0a10" />
            <path d="M5 33l5-1 3-9 3-1-2 8-4 4z" fill="#8b0f16" />
            <path d="M20 28l9-2-2 5-5 1z" fill="#8b0f16" />
            <path d="M30 18h7l-3.500 4z" fill="#333" />
          </svg>
        </button>
        <div class="top-rows">
          <div class="title-row">
            <div class="quick">
              <template v-for="(t, i) in quickBar" :key="i">
                <Icon v-if="t === '>'" name="caretSmall" class="q-caret" />
                <button v-else class="q-tool" :aria-label="t"><Icon :name="t" class="ic" /></button>
              </template>
              <div class="q-workspace">
                <Icon name="gear" class="ic" />
                <select aria-label="Workspace"><option>AutoCAD Classic</option></select>
                <Icon name="caret" class="caret" />
              </div>
              <button class="q-more" aria-label="Customize"><svg viewBox="0 0 10 10"><path d="M1 1.500h8M1 4h8l-4 4z" fill="#000" stroke="#000" /></svg></button>
            </div>
            <h1 class="title"><span>AutoCAD 2013</span><span>Proyecto Casa Robinson.dwg</span></h1>
            <div class="info">
              <button class="info-arrow" aria-label="Collapse"><svg viewBox="0 0 6 8"><path d="M1 0l5 4-5 4z" /></svg></button>
              <input v-model="search" type="text" placeholder="Type a keyword or phrase" aria-label="Search" />
              <button class="i-tool" aria-label="Find"><Icon name="binoc" class="ic" /></button>
              <button class="sign"><Icon name="user" class="ic" />Sign In<Icon name="caretSmall" class="q-caret" /></button>
              <button class="i-tool" aria-label="Exchange"><Icon name="exchange" class="ic" /></button>
              <button class="i-tool wide" aria-label="Connect"><Icon name="connect" class="ic" /><Icon name="caretSmall" class="q-caret" /></button>
              <button class="i-tool wide help" aria-label="Help"><Icon name="helpRound" class="ic" /><Icon name="caretSmall" class="q-caret" /></button>
            </div>
            <div class="win-buttons">
              <button aria-label="Minimize"><svg viewBox="0 0 12 12"><path d="M2 9h8" stroke-width="2" /></svg></button>
              <button aria-label="Maximize"><svg viewBox="0 0 12 12"><path d="M1.500 2.500h9v7h-9z" /><path d="M1 3h10" stroke-width="2" /></svg></button>
              <button class="close" aria-label="Close"><svg viewBox="0 0 12 12"><path d="M2.500 2.500l7 7M9.500 2.500l-7 7" stroke-width="2" /></svg></button>
            </div>
          </div>
          <nav class="menu">
            <a v-for="m in menus" :key="m" href="#">{{ m }}</a>
            <div class="mdi">
              <button aria-label="Minimize drawing"><svg viewBox="0 0 12 12"><path d="M1 9h10" stroke-width="2" /></svg></button>
              <button aria-label="Restore drawing"><svg viewBox="0 0 12 12"><path d="M4.500 5v-3.500h7v6h-3M.5 5.500h7v5h-7z" /></svg></button>
              <button aria-label="Close drawing"><svg viewBox="0 0 12 12"><path d="M2 1.500l8 9M10 1.500l-8 9" stroke-width="2.500" /></svg></button>
            </div>
          </nav>
        </div>
      </header>

      <section class="workspace">
        <div class="bar-row">
          <div class="bar">
            <i class="grip"></i>
            <template v-for="(t, i) in standardBar" :key="i">
              <i v-if="t === '|'" class="sep"></i>
              <Icon v-else-if="t === '>'" name="caretSmall" class="b-caret" />
              <button v-else class="tool" :aria-label="t"><Icon :name="t" class="ic" /></button>
            </template>
          </div>
          <div class="bar">
            <i class="grip"></i>
            <template v-for="(s, i) in styleBar" :key="s.label">
              <i v-if="i" class="sep"></i>
              <button class="tool" :aria-label="s.label + ' manager'"><Icon :name="s.icon" class="ic" /></button>
              <div class="combo w-style" :class="s.cls">
                <select :aria-label="s.label"><option>{{ s.value }}</option></select>
                <Icon name="chevron" class="chev" />
              </div>
            </template>
          </div>
        </div>

        <div class="bar-row">
          <div class="bar">
            <i class="grip"></i>
            <div class="combo w-space">
              <select aria-label="Workspace list"><option>AutoCAD Classic</option></select>
              <Icon name="chevron" class="chev" />
            </div>
            <button class="tool" aria-label="Workspace settings"><Icon name="gear" class="ic" /></button>
            <button class="tool" aria-label="My workspace"><Icon name="frame" class="ic" /></button>
          </div>
          <div class="bar">
            <i class="grip"></i>
            <button class="tool" aria-label="Layer properties"><Icon name="layers" class="ic" /></button>
            <div class="combo w-layer">
              <Icon name="bulb" class="ic" />
              <Icon name="sun" class="ic" />
              <Icon name="vpFreeze" class="ic" />
              <Icon name="unlock" class="ic" />
              <i class="swatch"></i>
              <select aria-label="Layer"><option>0</option></select>
              <Icon name="chevron" class="chev" />
            </div>
            <button class="tool" aria-label="Make current"><Icon name="layerCur" class="ic" /></button>
            <button class="tool" aria-label="Layer previous"><Icon name="layerPrev" class="ic" /></button>
            <button class="tool" aria-label="Layer states"><Icon name="layerStates" class="ic" /></button>
          </div>
          <div class="bar">
            <i class="grip"></i>
            <div class="combo w-color">
              <i class="swatch"></i>
              <select aria-label="Color"><option>ByLayer</option></select>
              <Icon name="chevron" class="chev" />
            </div>
            <i class="sep"></i>
            <div class="combo w-ltype">
              <i class="stroke long"></i>
              <select aria-label="Linetype"><option>ByLayer</option></select>
              <Icon name="chevron" class="chev" />
            </div>
            <i class="sep"></i>
            <div class="combo w-lweight">
              <i class="stroke"></i>
              <select aria-label="Lineweight"><option>ByLayer</option></select>
              <Icon name="chevron" class="chev" />
            </div>
            <i class="sep"></i>
            <div class="combo w-plot disabled">
              <select aria-label="Plot style" disabled><option>ByColor</option></select>
              <Icon name="chevron" class="chev" />
            </div>
          </div>
        </div>

        <div class="middle">
          <div class="vcol">
            <div class="vbar">
              <i class="vgrip"></i>
              <button v-for="t in drawBar" :key="t" class="vtool" :aria-label="t"><Icon :name="t" class="ic" /></button>
            </div>
          </div>

          <div class="document">
            <div class="doc-main">
              <div class="viewport">
                <svg class="drawing" shape-rendering="crispEdges" fill="none" stroke="#fff">
                  <defs>
                    <pattern id="plaid" x="650" y="407" width="21" height="21" patternUnits="userSpaceOnUse">
                      <path d="M0 0h21v21h-21z" fill="#808080" stroke="none" />
                      <path d="M0 0h4v4h-4zM5 0h5v4h-5zM0 5h4v5h-4zM5 5h5v5h-5zM12 0h1v4h-1zM12 5h1v5h-1zM18 0h1v4h-1zM18 5h1v5h-1zM0 12h4v1h-4zM5 12h5v1h-5z" fill="#000" stroke="none" />
                    </pattern>
                    <pattern id="wood" x="572" y="371" width="21" height="52" patternUnits="userSpaceOnUse">
                      <path d="M1 0v52M3 0c2 12-1 16 1 26s-2 16 0 26M6 0c1 10-3 18 0 28s-1 16 0 24M9 0c-2 10 4 14 2 24s-4 18-2 28M12 0c-2 10 4 16 1 26s-3 16-1 26M15 0c-2 12 3 14 1 26s-3 16-1 26M18 0c-1 12 2 16 0 26s-1 16 0 26" stroke="#9a9a9a" shape-rendering="auto" />
                    </pattern>
                    <g id="plant">
                      <circle r="8" stroke="#bbb" stroke-width="2" stroke-dasharray="2 1" />
                      <circle r="5" stroke="#888" stroke-width="4" />
                      <path d="M-3 2v-4h3v3h3M-1 4h3M-6 -4l3 2M5 -5l-2 3M6 4l-3 -1M-5 5l2 -1" />
                    </g>
                    <g id="pillow">
                      <path d="M2 1l5 2 5-2 5 1-2 6 3 8-2 5 1 6-6-2-5 2-5-1 2-5-2-8 2-6zM5 5l3 6-2 6M15 5l-5 5 2 4M3 20l4-4 3 5 4-3" />
                    </g>
                  </defs>
                  <g transform="translate(-41 -112)">
                    <!-- walls -->
                    <path d="M742.500 184v329M735.500 192v134M238 512.500h505M407 504.500h101M626 504.500h54M735.500 380v42M735.500 476v36M563.500 341v171M571.500 341v171M563 340.500h9M526 397.500h37M526 403.500h37" />
                    <!-- windows -->
                    <path d="M735.500 328v50M742.500 328v50M735.500 424v50M742.500 424v50M511 504.500h50M511 512.500h50M574 504.500h50M574 512.500h50M683 504.500h49M683 512.500h49" stroke="#7d8b92" />
                    <path d="M739 328v50M739 424v50M511 508h50M574 508h50M683 508h49" stroke="#29a8e0" stroke-width="2" />
                    <path d="M735.500 325.500h7v2h-7zM735.500 378.500h7v2h-7zM735.500 421.500h7v2h-7zM735.500 474.500h7v2h-7zM507.500 504.500h3v8h-3zM561.500 504.500h2v8h-2zM571.500 504.500h2v8h-2zM624.500 504.500h3v8h-3zM679.500 504.500h3v8h-3zM732.500 504.500h3v8h-3z" />
                    <!-- doors -->
                    <path d="M568 294.500c24 2 43 18 44.500 42M518.500 347c0 24 18 41 42 43" stroke="#8f8f8f" />
                    <path d="M564 293v3h2v-2h4M564 340v-3h5M569.500 336.500h43v2h-43zM559.500 347.500h2v43h-2zM563 341h-2v5M516 341.500h2v5h-2" stroke-dasharray="9 1" />
                    <path d="M585 337.500h14M606 337.500h6M560.500 362v14M560.500 386v4" />
                    <!-- wardrobe -->
                    <path d="M572 371h21v103h-21z" fill="url(#wood)" stroke="none" />
                    <path d="M572.500 370.500h21v104h-21z" stroke-dasharray="2 1" />
                    <path d="M594 372v100" stroke-width="2" />
                    <circle cx="583" cy="456.500" r="6" stroke="#e019d8" stroke-width="5" />
                    <circle cx="583" cy="456.500" r="8.500" stroke="#f391ee" stroke-dasharray="2 1" />
                    <circle cx="583" cy="456.500" r="2.500" fill="#000" />
                    <path d="M583 456h1" />
                    <!-- bed -->
                    <path d="M629 390h54v28h22v38h-76z" fill="url(#plaid)" stroke="none" />
                    <path d="M683 389.500h50.500v66h-104" stroke="#808080" />
                    <path d="M683 389.500h-52l-2 2v62l2 2M683 389.500l28.500 28.500v38h-7" />
                    <use href="#pillow" x="713" y="391" />
                    <use href="#pillow" x="713" y="425" />
                    <!-- night tables -->
                    <path d="M707.500 359.500h26v26h-26zM707.500 459.500h26v26h-26z" stroke="#7c6337" />
                    <use href="#plant" x="721" y="372" />
                    <use href="#plant" x="721" y="472" />
                    <path d="M1115 290L826 634" />
                    <!-- ucs icon -->
                    <path d="M57.500 684v49M57 733.500h50M53.500 728.500h9v9h-9z" />
                    <g stroke="none" class="cad-text">
                      <text x="631" y="350" class="small">Dormitorio</text>
                      <text x="631" y="365" class="small">Principal</text>
                      <text x="410" y="555" class="large">Planta Arquitectónica</text>
                      <text x="59" y="679" class="axis">Y</text>
                      <text x="112" y="732" class="axis">X</text>
                    </g>
                  </g>
                  <line x1="0" x2="100%" y1="570.500" y2="570.500" />
                  <line x1="1127.500" x2="1127.500" y1="0" y2="100%" />
                  <path d="M1124.500 567.500h6v6h-6z" fill="#000" />
                </svg>
                <svg class="compass" viewBox="0 0 124 130">
                  <circle cx="62" cy="60" r="48" fill="none" stroke="#2d2d2d" stroke-width="11" />
                  <path d="M39 37h46v46h-46z" fill="#b1b1b1" />
                  <path d="M48 46h28v28h-28z" fill="#a2a9ae" />
                  <text x="62" y="64" class="face">TOP</text>
                  <text x="62" y="17">N</text>
                  <text x="62" y="118">S</text>
                  <text x="11" y="67">W</text>
                  <text x="113" y="67">E</text>
                </svg>
                <button class="wcs">WCS<svg viewBox="0 0 8 6"><path d="M.5 .5h7l-3.500 4z" fill="none" stroke="#b5b5c5" /></svg></button>
              </div>
              <div class="scroll-v">
                <svg viewBox="0 0 10 10"><path d="M2 7l3-4 3 4" /></svg>
                <i></i>
                <svg viewBox="0 0 10 10"><path d="M2 3l3 4 3-4" /></svg>
              </div>
            </div>
            <div class="doc-foot">
              <button class="nav" aria-label="First"><svg viewBox="0 0 10 10"><path d="M2 1v8" stroke="#555" /><path d="M9 1v8l-5-4z" /></svg></button>
              <button class="nav" aria-label="Previous"><svg viewBox="0 0 10 10"><path d="M7 1v8l-5-4z" /></svg></button>
              <button class="nav" aria-label="Next"><svg viewBox="0 0 10 10"><path d="M3 1v8l5-4z" /></svg></button>
              <button class="nav" aria-label="Last"><svg viewBox="0 0 10 10"><path d="M8.500 1v8" stroke="#555" /><path d="M1 1v8l5-4z" /></svg></button>
              <button v-for="t in tabs" :key="t" class="tab" :class="{ active: t === activeTab }" @click="activeTab = t">{{ t }}</button>
              <div class="scroll-h">
                <svg viewBox="0 0 10 10"><path d="M7 2l-4 3 4 3" /></svg>
                <i></i>
              </div>
            </div>
          </div>

          <div class="vcol right">
            <div class="vbar">
              <i class="vgrip"></i>
              <button v-for="t in modifyBar" :key="t" class="vtool" :aria-label="t"><Icon :name="t" class="ic" /></button>
            </div>
            <div class="vbar">
              <i class="vgrip"></i>
              <template v-for="(t, i) in orderBar" :key="i">
                <i v-if="t === '|'" class="vsep"></i>
                <button v-else class="vtool" :aria-label="t"><Icon :name="t" class="ic" /></button>
              </template>
            </div>
          </div>
          <div class="vcol">
            <div class="vbar">
              <i class="vgrip"></i>
              <template v-for="(t, i) in dimBar" :key="i">
                <i v-if="t === '|'" class="vsep"></i>
                <button v-else class="vtool" :aria-label="t"><Icon :name="t" class="ic" /></button>
              </template>
            </div>
          </div>
        </div>

        <div class="command">
          <div class="command-side">
            <i></i>
            <button aria-label="Close command line"><svg viewBox="0 0 12 12"><path d="M2 2l8 8M10 2l-8 8" stroke-width="2" /></svg></button>
            <button aria-label="Customize command line"><svg viewBox="0 0 12 12"><path d="M4 4l7 7" stroke-width="2.500" /><path d="M1 3l2 2 2-1 1-2-2-2" stroke-width="1.500" /></svg></button>
          </div>
          <div class="command-main">
            <div class="history">
              <p>Specify next point or [Undo]:</p>
              <p>Specify next point or [Undo]: *Cancel*</p>
            </div>
            <div class="prompt">
              <svg viewBox="0 0 15 13"><path d="M.5 .5h14v12h-14z" fill="#dfe4ea" stroke="#8a929c" /><path d="M3 3.500l3 3-3 3M7.500 9.500h4" fill="none" stroke="#333" /></svg>
              <Icon name="caretSmall" class="q-caret" />
              <input v-model="command" type="text" placeholder="Type a command" aria-label="Command" />
            </div>
          </div>
        </div>
      </section>

      <footer class="status">
        <span class="coords">2221.40, 1255.21, 0.00</span>
        <div class="group">
          <button v-for="m in modes" :key="m.icon" :class="{ on: m.on }" :aria-label="m.icon" @click="m.on = !m.on"><Icon :name="m.icon" class="ic" /></button>
        </div>
        <div class="group push">
          <button class="text">MODEL</button>
          <button aria-label="Quick view layouts"><Icon name="modelIc" class="ic" /></button>
          <button aria-label="Quick view drawings"><Icon name="layoutsIc" class="ic" /></button>
        </div>
        <div class="group near">
          <button class="scale"><Icon name="anno" class="ic" />1:1<Icon name="caret" class="caret" /></button>
          <button aria-label="Annotation visibility"><Icon name="annoLight" class="ic" /></button>
          <button aria-label="Annotation scale"><Icon name="annoAuto" class="ic" /></button>
        </div>
        <div class="group near">
          <button aria-label="Workspace switching"><Icon name="gear" class="ic" /></button>
          <button aria-label="Lock toolbars"><Icon name="lockOpen" class="ic" /></button>
          <button aria-label="Hardware acceleration"><Icon name="hardware" class="ic" /></button>
        </div>
        <div class="tray-box">
          <Icon name="plotJob" class="ic" />
          <Icon name="bulb" class="ic" />
        </div>
        <div class="group near">
          <button class="slim" aria-label="Status menu"><Icon name="caret" class="caret" /></button>
          <button aria-label="Clean screen"><Icon name="clean" class="ic" /></button>
        </div>
        <svg class="resize" viewBox="0 0 12 12"><path d="M8 2h3M4 6h7M0 10h11" stroke="#b4b4b4" stroke-width="2" stroke-dasharray="3 1" /></svg>
      </footer>
    </main>

    <aside v-if="balloon" class="balloon">
      <div class="balloon-head">
        <svg viewBox="0 0 16 16"><circle cx="8" cy="8" r="7.500" fill="#1f49b6" stroke="#8fa3c9" /><path d="M8 3v2M8 6.500v6.500" stroke="#fff" stroke-width="2.500" /></svg>
        <strong>Plot and Publish Job Complete</strong>
        <button aria-label="Close message" @click="balloon = false"><svg viewBox="0 0 12 12"><path d="M2.500 2.500l7 7M9.500 2.500l-7 7" stroke="#000" stroke-width="2.500" /></svg></button>
      </div>
      <p>No errors or warnings found</p>
      <a href="#">Click to view plot and publish details...</a>
      <svg class="tail" viewBox="0 0 20 21"><path d="M1 0l18 19V0z" fill="#ffffe1" /><path d="M1 1l18 19V1" fill="none" stroke="#000" /></svg>
    </aside>

    <div class="taskbar">
      <button v-for="a in apps" :key="a.name" class="app" :class="a.state" :aria-label="a.name">
        <span><svg viewBox="0 0 32 32" v-html="a.art"></svg></span>
      </button>
      <div class="tray">
        <svg viewBox="0 0 16 16"><path d="M4 10l4-4 4 4z" fill="#fff" /></svg>
        <svg viewBox="0 0 16 16"><path d="M2 1v14" stroke="#fff" stroke-width="1.500" /><path d="M3 2c4-2 6 2 11 0v7c-5 2-7-1-11 0z" fill="#fff" /><path d="M11 6l5 9h-10z" fill="#f3c627" stroke="#7a5c00" stroke-width=".6" /><path d="M11 9v3M11 13v1" stroke="#000" /></svg>
        <svg viewBox="0 0 16 16"><path d="M9 3h5v11.500h-5zM10.500 2h2" fill="none" stroke="#fff" stroke-width="1.600" /><path d="M2.500 1v4M5.500 1v4M1 5h6v3h-6zM4 8v7" fill="#fff" stroke="#fff" /></svg>
        <svg viewBox="0 0 16 16"><path d="M1 14v-2h2v2zM4 14v-4h2v4zM7 14v-6h2v6zM10 14v-9h2v9zM13 14v-12h2v12z" fill="#fff" /></svg>
        <svg viewBox="0 0 16 16"><path d="M1 5.500h3l4-4v13l-4-4h-3z" fill="#fff" /><path d="M10 5.500q2 2.500 0 5M12 3.500q3 4.500 0 9" fill="none" stroke="#fff" /></svg>
        <div class="stamp"><span>ESP</span><span>LAA</span></div>
        <div class="stamp"><span>10:44 p. m.</span><span>05/09/2013</span></div>
      </div>
    </div>
  </div>
</template>

<style>
body {
  margin: 0;
  background: #0a3fb5;
}
</style>

<style scoped>
.desktop {
  position: relative;
  display: flex;
  flex-direction: column;
  min-height: 100vh;
  font-family: 'Open Sans', 'Noto Sans', sans-serif;
  font-size: 12px;
  line-height: 16px;
  color: #111;
}

.desktop * {
  box-sizing: border-box;
}

button,
select,
input {
  margin: 0;
  padding: 0;
  border: 0;
  border-radius: 0;
  background: none;
  font: inherit;
  color: inherit;
}

button {
  display: flex;
  align-items: center;
  justify-content: center;
}

select {
  appearance: none;
  flex: 1;
  min-width: 0;
  outline: none;
}

.ic {
  width: 16px;
  height: 16px;
  flex: none;
}

.window {
  flex: 1;
  display: flex;
  flex-direction: column;
  padding: 0 8px 8px;
  border: 2px solid #1d5fd6;
  border-left-color: #0a3fb5;
  border-bottom: 0;
  background: #ebebeb;
}

/* title and menu */
.top {
  display: flex;
}

.app-button {
  width: 41px;
  height: 41px;
  margin-top: 8px;
  border: 1px solid #3c3c3c;
  background: linear-gradient(#d8d8d8, #8f8f8f);
}

.app-logo {
  width: 39px;
  height: 39px;
}

.top-rows {
  flex: 1;
  min-width: 0;
}

.title-row {
  display: flex;
  height: 32px;
}

.quick {
  display: flex;
  align-items: center;
  height: 24px;
  margin-top: 8px;
  padding-left: 5px;
  border: 1px solid #6a6a6a;
  border-left: 0;
  background: linear-gradient(#b6b6b6, #8e8e8e);
}

.q-tool {
  width: 24px;
}

.q-caret {
  width: 12px;
  height: 12px;
}

.q-workspace {
  display: flex;
  align-items: center;
  width: 179px;
  height: 22px;
  padding-left: 3px;
  gap: 2px;
  background: linear-gradient(#e3e3e3, #cfcfcf);
  border: 1px solid #777;
}

.caret {
  width: 12px;
  height: 12px;
}

.q-more {
  width: 16px;
  height: 22px;
}

.q-more svg {
  width: 8px;
  height: 8px;
}

.title {
  flex: 1;
  display: flex;
  justify-content: center;
  gap: 24px;
  margin: 0;
  padding-top: 6px;
  font-size: 14px;
  font-weight: 400;
  line-height: 22px;
  white-space: nowrap;
}

.info {
  display: flex;
  align-items: center;
  width: 445px;
  height: 24px;
  margin-top: 8px;
  border: 1px solid #6a6a6a;
  background: linear-gradient(#b6b6b6, #8e8e8e);
  color: #fff;
}

.info-arrow {
  width: 14px;
}

.info-arrow svg {
  width: 6px;
  height: 8px;
}

.info input {
  width: 179px;
  height: 20px;
  padding: 3px 3px 0;
  background: #fff;
  font-style: italic;
  font-size: 11px;
  color: #222;
}

.i-tool {
  width: 24px;
}

.i-tool.wide {
  width: 37px;
}

.i-tool.help {
  margin-left: 8px;
}

.sign {
  flex: 1;
  gap: 6px;
  padding-left: 4px;
}

.sign .q-caret {
  margin-left: auto;
}

.win-buttons {
  display: flex;
  margin-left: 24px;
}

.win-buttons button {
  width: 27px;
  height: 21px;
}

.win-buttons .close {
  width: 45px;
  background: #bfbfbf;
}

.win-buttons svg {
  width: 12px;
  height: 12px;
  fill: none;
  stroke: #222;
}

.win-buttons .close svg {
  stroke: #fff;
}

.menu {
  display: flex;
  align-items: center;
  height: 21px;
  padding-left: 14px;
  gap: 22px;
  border-top: 1px solid #333;
  background: linear-gradient(#a2a2a2, #5c5c5c);
}

.menu a {
  color: #fff;
  text-decoration: none;
}

.mdi {
  display: flex;
  gap: 5px;
  margin-left: auto;
  padding-right: 3px;
}

.mdi svg {
  display: block;
  width: 12px;
  height: 12px;
  fill: none;
  stroke: #222;
}

/* toolbars */
.workspace {
  flex: 1;
  display: flex;
  flex-direction: column;
  background: #aeb1ba;
}

.bar-row {
  display: flex;
  gap: 1px;
  margin-bottom: 3px;
}

.bar {
  display: flex;
  align-items: center;
  height: 24px;
  border: 1px solid #6f7278;
  background: #ebebeb;
}

.grip {
  width: 8px;
  align-self: stretch;
  border: 3px solid #9a9da6;
  border-width: 3px 2px;
  background: #9a9da6 repeating-conic-gradient(#f5f5f5 0 25%, #777b84 0 50%) 0 0 / 2px 3px;
}

.tool {
  width: 23px;
  height: 22px;
}

.sep {
  width: 2px;
  height: 18px;
  margin: 0 2px;
  background: #111;
}

.b-caret {
  width: 13px;
  height: 12px;
}

.combo {
  display: flex;
  align-items: center;
  height: 22px;
  padding-left: 4px;
  border: 1px solid #c3c4c8;
  background: linear-gradient(#f4f4f4, #e2e2e2);
}

.combo.indent {
  padding-left: 17px;
}

.chev {
  width: 16px;
  height: 16px;
  flex: none;
}

.w-style {
  width: 120px;
}

.w-space {
  width: 174px;
  padding-left: 8px;
}

.w-layer {
  width: 298px;
}

.w-color {
  width: 152px;
  padding-left: 4px;
}

.w-ltype {
  width: 160px;
}

.w-lweight {
  width: 126px;
}

.w-plot {
  width: 118px;
  padding-left: 8px;
}

.disabled {
  color: #8c8c8c;
}

.disabled select {
  opacity: 1;
}

.disabled .chev {
  opacity: 0.35;
}

.swatch {
  width: 10px;
  height: 10px;
  margin: 0 5px 0 2px;
  border: 1px solid #000;
  background: #fff;
}

.stroke {
  width: 35px;
  height: 1px;
  margin-right: 5px;
  background: #000;
}

.stroke.long {
  width: 60px;
}

/* drawing area */
.middle {
  flex: 1;
  display: flex;
  padding-top: 1px;
}

.vcol {
  display: flex;
  flex-direction: column;
  gap: 1px;
  width: 25px;
  margin-right: 3px;
}

.vcol.right {
  margin-left: 4px;
}

.vbar {
  display: flex;
  flex-direction: column;
  align-items: center;
  border: 1px solid #6f7278;
  background: #ebebeb;
}

.vgrip {
  width: 23px;
  height: 8px;
  border: 2px solid #9a9da6;
  border-width: 2px 5px;
  background: #9a9da6 repeating-conic-gradient(#f5f5f5 0 25%, #777b84 0 50%) 0 0 / 2px 3px;
}

.vtool {
  width: 23px;
  height: 22px;
}

.vsep {
  width: 19px;
  height: 2px;
  margin: 2px 0;
  background: #b5b5b5;
}

.document {
  flex: 1;
  min-width: 0;
  display: flex;
  flex-direction: column;
  margin: 1px 0 4px 2px;
  border: 1px solid #777;
  border-width: 1px 0 0 1px;
}

.doc-main {
  flex: 1;
  display: flex;
}

.viewport {
  position: relative;
  flex: 1;
  min-width: 0;
  overflow: hidden;
  background: #000;
}

.drawing {
  position: absolute;
  inset: 0;
  width: 100%;
  height: 100%;
}

.cad-text {
  fill: #fff;
  font-family: Lato, sans-serif;
  font-weight: 300;
}

.cad-text .small {
  font-size: 13px;
}

.cad-text .large {
  font-size: 24px;
}

.cad-text .axis {
  font-size: 18px;
}

.compass {
  position: absolute;
  top: 13px;
  right: 12px;
  width: 124px;
  height: 130px;
}

.compass text {
  fill: #adadad;
  font-family: 'Liberation Sans', sans-serif;
  font-size: 19px;
  font-weight: 700;
  text-anchor: middle;
}

.compass .face {
  fill: #42474c;
  font-size: 11px;
}

.wcs {
  position: absolute;
  top: 152px;
  right: 50px;
  width: 48px;
  height: 17px;
  gap: 6px;
  border: 1px solid #a3a3b5;
  border-radius: 4px;
  background: #8a8a9b;
  font-family: 'Liberation Sans', sans-serif;
  font-size: 11px;
  color: #3c3c48;
}

.wcs svg {
  width: 8px;
  height: 6px;
}

.scroll-v {
  display: flex;
  flex-direction: column;
  align-items: center;
  width: 19px;
  padding: 4px 2px 4px 0;
  border-right: 1px solid #fff;
  background: #f0f0f0;
}

.scroll-v svg,
.scroll-h svg {
  width: 10px;
  height: 10px;
  fill: none;
  stroke: #555;
  stroke-width: 2;
}

.scroll-v i {
  width: 15px;
  height: 17px;
  margin: auto 0 3px;
  background: #cdcdcd;
}

.doc-foot {
  display: flex;
  height: 17px;
  border-bottom: 1px solid #fff;
  background: #f0f0f0;
}

.nav {
  width: 15px;
  border-right: 1px solid #aaa;
}

.nav svg {
  width: 10px;
  height: 10px;
  fill: #555;
}

.tab {
  padding: 0 9px 0 5px;
  font-size: 11px;
  background: linear-gradient(110deg, transparent calc(100% - 5px), #777 0, #777 calc(100% - 4px), transparent 0);
}

.tab.active {
  padding: 0 10px;
  background: #000;
  clip-path: polygon(0 0, 100% 0, calc(100% - 6px) 100%, 6px 100%);
  color: #fff;
}

.scroll-h {
  display: flex;
  align-items: center;
  width: 34%;
  margin-left: auto;
}

.scroll-h i {
  width: 17px;
  height: 14px;
  margin-left: 23%;
  background: #cdcdcd;
}

/* command line */
.command {
  display: flex;
  height: 58px;
  border-bottom: 1px solid #000;
}

.command-side {
  display: flex;
  flex-direction: column;
  align-items: center;
  gap: 9px;
  width: 22px;
  padding-top: 4px;
  background: linear-gradient(#9a9a9a, #3c3c3c);
}

.command-side i {
  width: 16px;
  height: 5px;
  background: radial-gradient(#ddd 1px, transparent 1px) 0 0 / 3px 3px;
}

.command-side svg {
  display: block;
  width: 12px;
  height: 12px;
  fill: none;
  stroke: #fff;
}

.command-main {
  flex: 1;
  font-family: 'DejaVu Sans Mono', monospace;
}

.history {
  height: 35px;
  padding: 2px 3px;
  border: 1px solid #7d7d7d;
  border-left: 0;
  background: #c8c8c8;
}

.history p {
  margin: 0;
  line-height: 15px;
}

.prompt {
  display: flex;
  align-items: center;
  height: 22px;
  padding-left: 6px;
  background: #fff;
}

.prompt > svg:first-child {
  width: 15px;
  height: 13px;
}

.prompt input {
  flex: 1;
  margin-left: 4px;
  font-style: italic;
}

input::placeholder {
  color: #8b8b8b;
  opacity: 1;
}

input {
  outline: none;
}

/* status bar */
.status {
  display: flex;
  align-items: stretch;
  height: 22px;
  background: linear-gradient(#fafbfc, #cdd0d4);
}

.coords {
  width: 172px;
  padding-left: 12px;
  font-family: 'Liberation Sans', sans-serif;
  line-height: 24px;
}

.group {
  display: flex;
  margin-right: 12px;
  border-right: 1px solid #666;
}

.group.push {
  margin-left: auto;
}

.group.near {
  margin-right: 5px;
}

.group button {
  width: 22px;
  border-left: 1px solid #666;
  background: linear-gradient(#d0d0d0, #a4a4a4);
}

.group button.on {
  background: linear-gradient(#e8f6fa, #a5d3df 50%, #c5e8f0);
}

.group .text {
  width: 44px;
  font-family: 'Liberation Sans', sans-serif;
  font-size: 11px;
}

.group .scale {
  width: 52px;
  gap: 2px;
}

.group .slim {
  width: 11px;
}

.tray-box {
  display: flex;
  align-items: center;
  gap: 6px;
  margin: 3px 5px 3px 0;
  padding: 0 3px;
  background: #c2c4c8;
}

.resize {
  width: 12px;
  height: 12px;
  align-self: flex-end;
}

/* notification */
.balloon {
  position: absolute;
  right: 41px;
  bottom: 77px;
  width: 248px;
  height: 81px;
  padding: 9px 9px 0 15px;
  border: 1px solid #000;
  border-radius: 14px;
  background: #ffffe1;
}

.balloon-head {
  display: flex;
  align-items: center;
  height: 16px;
  margin-left: -7px;
  white-space: nowrap;
}

.balloon-head > svg {
  width: 16px;
  height: 16px;
}

.balloon-head strong {
  margin-left: 10px;
  font-size: 11px;
}

.balloon-head button {
  width: 16px;
  height: 16px;
  margin-left: auto;
  border: 1px solid #999;
  background: #f4f4e8;
}

.balloon-head button svg {
  width: 12px;
  height: 12px;
}

.balloon p {
  margin: 6px 0 5px;
}

.balloon a {
  color: #1414c8;
  white-space: nowrap;
}

.tail {
  position: absolute;
  right: 55px;
  top: 78px;
  width: 20px;
  height: 21px;
}

/* taskbar */
.taskbar {
  display: flex;
  align-items: center;
  gap: 4px;
  height: 40px;
  padding: 0 26px 0 17px;
  background: #3a5fa5;
}

.app {
  width: 58px;
  height: 39px;
}

.app span {
  flex: 1;
  display: flex;
  align-items: center;
  justify-content: center;
  height: 37px;
}

.app svg {
  width: 30px;
  height: 30px;
}

.run {
  border: 1px solid #2a4680;
}

.run span {
  border: 1px solid #90a4d0;
  background: #6079b2;
}

.stack span {
  margin-right: 2px;
}

.stack::after {
  content: '';
  width: 2px;
  height: 37px;
  background: #7f94c4;
}

.active span {
  border-color: #fff;
  background: #8ba0cc;
}

.active::after {
  background: #e5ebf7;
}

.record span {
  border-color: #f5ef9a;
  background: linear-gradient(#dcd94a, #e09a3c);
}

.tray {
  display: flex;
  align-items: center;
  gap: 8px;
  margin-left: auto;
  color: #fff;
}

.tray svg {
  width: 16px;
  height: 16px;
}

.stamp {
  display: flex;
  flex-direction: column;
  align-items: center;
  margin-left: 8px;
  font-size: 11px;
  line-height: 17px;
  white-space: nowrap;
}

.stamp + .stamp {
  margin-left: 10px;
}
</style>
